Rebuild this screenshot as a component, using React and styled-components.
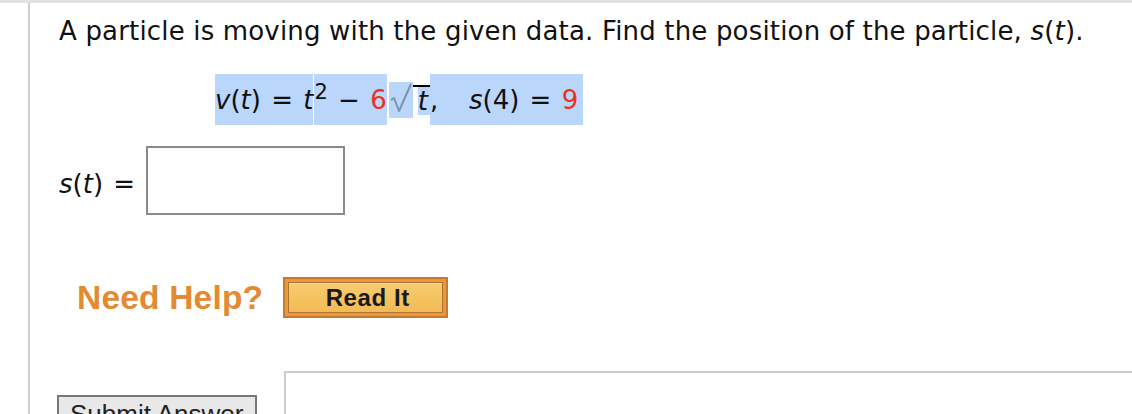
import React from 'react';
import styled, { createGlobalStyle } from 'styled-components';

const GlobalStyle = createGlobalStyle`
  html, body {
    margin: 0;
    padding: 0;
    background: #fff;
    overflow: hidden;
  }
  body {
    font-family: "DejaVu Sans", Verdana, sans-serif;
    color: #111;
  }
`;

const Page = styled.div`
  width: 1132px;
  height: 414px;
  border-top: 3px solid #e2e2e2;
  box-sizing: border-box;
  overflow: hidden;
`;

const Panel = styled.div`
  margin-left: 28px;
  border-left: 2px solid #cfcfcf;
  padding-left: 29px;
  height: 100%;
  box-sizing: border-box;
`;

const Question = styled.p`
  margin: 0;
  padding-top: 13px;
  font-size: 26px;
  line-height: 30px;
  letter-spacing: 0.17px;
  white-space: nowrap;
`;

const MathLine = styled.div`
  margin-top: 28px;
  padding-left: 156px;
  display: flex;
  align-items: center;
  font-size: 26px;
  line-height: 30px;
  height: 51px;
  word-spacing: 2px;
`;

const Sel = styled.span`
  background: #bad6fb;
  display: inline-flex;
  align-items: center;
  height: ${(p) => p.$h || 51}px;
  margin-left: ${(p) => p.$gap || 0}px;
  padding-right: ${(p) => p.$pr || 0}px;
  white-space: pre;
`;

const Red = styled.span`
  color: #e8321f;
`;

const Sup = styled.sup`
  font-size: 21px;
  position: relative;
  top: -8px;
  vertical-align: baseline;
`;

const RadicalBox = styled.span`
  width: 24px;
  height: 36px;
  display: inline-block;
`;

const Overline = styled.span`
  border-top: 2px solid #000;
  font-style: italic;
  line-height: 28px;
  margin-left: -5px;
  padding: 0 2px 0 5px;
`;

const AnswerRow = styled.div`
  margin-top: 21px;
  display: flex;
  align-items: center;
  gap: 11px;
  font-size: 26px;
  line-height: 30px;
`;

const Label = styled.span`
  padding-top: 6px;
  word-spacing: 2px;
`;

const AnswerBox = styled.div`
  width: 199px;
  height: 69px;
  border: 2px solid #8a8a8a;
  box-sizing: border-box;
  background: #fff;
`;

const HelpRow = styled.div`
  margin-top: 62px;
  margin-left: 18px;
  display: flex;
  align-items: center;
  gap: 20px;
  height: 41px;
`;

const HelpText = styled.span`
  font-family: "Liberation Sans", Arial, sans-serif;
  font-weight: bold;
  font-size: 33.5px;
  line-height: 36px;
  color: #e38a32;
  letter-spacing: 0.2px;
`;

const ReadIt = styled.button`
  width: 165px;
  height: 41px;
  box-sizing: border-box;
  border: 2px solid #c87a2a;
  background: #e79a3d;
  padding: 3px;
  display: flex;
  cursor: pointer;
`;

const ReadItFace = styled.span`
  flex: 1;
  display: flex;
  align-items: center;
  justify-content: center;
  background: linear-gradient(#f8cb70, #f2bb55);
  border: 1px solid #b07030;
  box-shadow: inset 0 1px 0 #ffe3a8;
  font-family: "Liberation Sans", Arial, sans-serif;
  font-weight: bold;
  font-size: 24px;
  letter-spacing: 0.6px;
  color: #1a1a1a;
  padding-left: 4px;
`;

const BottomRow = styled.div`
  margin-top: 53px;
  margin-left: -2px;
  display: flex;
  align-items: flex-start;
  gap: 27px;
`;

const SubmitButton = styled.button`
  margin-top: 24px;
  width: 200px;
  height: 34px;
  box-sizing: border-box;
  border: 2px solid #777;
  background: #e8e8e8;
  font-family: "Liberation Sans", Arial, sans-serif;
  font-size: 26px;
  color: #222;
  padding: 3px 0 0 11px;
  text-align: left;
  line-height: 28px;
  display: flex;
  align-items: flex-start;
  white-space: nowrap;
  overflow: hidden;
`;

const FeedbackBox = styled.div`
  flex: 1;
  height: 80px;
  border: 2px solid #cccccc;
  border-right: none;
  box-sizing: border-box;
`;

const I = styled.i``;

function RadicalSign() {
  return (
    <svg width="24" height="36" viewBox="0 0 24 36">
      <path
        d="M2 18 L5 16 L10 29 L22 2"
        fill="none"
        stroke="#7d92ac"
        strokeWidth="2"
        strokeLinejoin="round"
      />
    </svg>
  );
}

export default function App() {
  return (
    <>
      <GlobalStyle />
      <Page>
        <Panel>
          <Question>
            A particle is moving with the given data. Find the position of the particle, <I>s</I>(<I>t</I>).
          </Question>
          <MathLine>
            <Sel>
              <I>v</I>(<I>t</I>) = <I>t</I>
            </Sel>
            <Sel $gap={1}>
              <Sup>2</Sup> − <Red>6</Red>
            </Sel>
            <Sel $h={36} $gap={2}>
              <RadicalBox>
                <RadicalSign />
              </RadicalBox>
            </Sel>
            <Sel $h={30} $gap={5}>
              <Overline>t</Overline>
            </Sel>
            <Sel $pr={5}>
              {',   '}
              <I>s</I>(4) = <Red>9</Red>
            </Sel>
          </MathLine>
          <AnswerRow>
            <Label>
              <I>s</I>(<I>t</I>) =
            </Label>
            <AnswerBox />
          </AnswerRow>
          <HelpRow>
            <HelpText>Need Help?</HelpText>
            <ReadIt>
              <ReadItFace>Read It</ReadItFace>
            </ReadIt>
          </HelpRow>
          <BottomRow>
            <SubmitButton>Submit Answer</SubmitButton>
            <FeedbackBox />
          </BottomRow>
        </Panel>
      </Page>
    </>
  );
}
